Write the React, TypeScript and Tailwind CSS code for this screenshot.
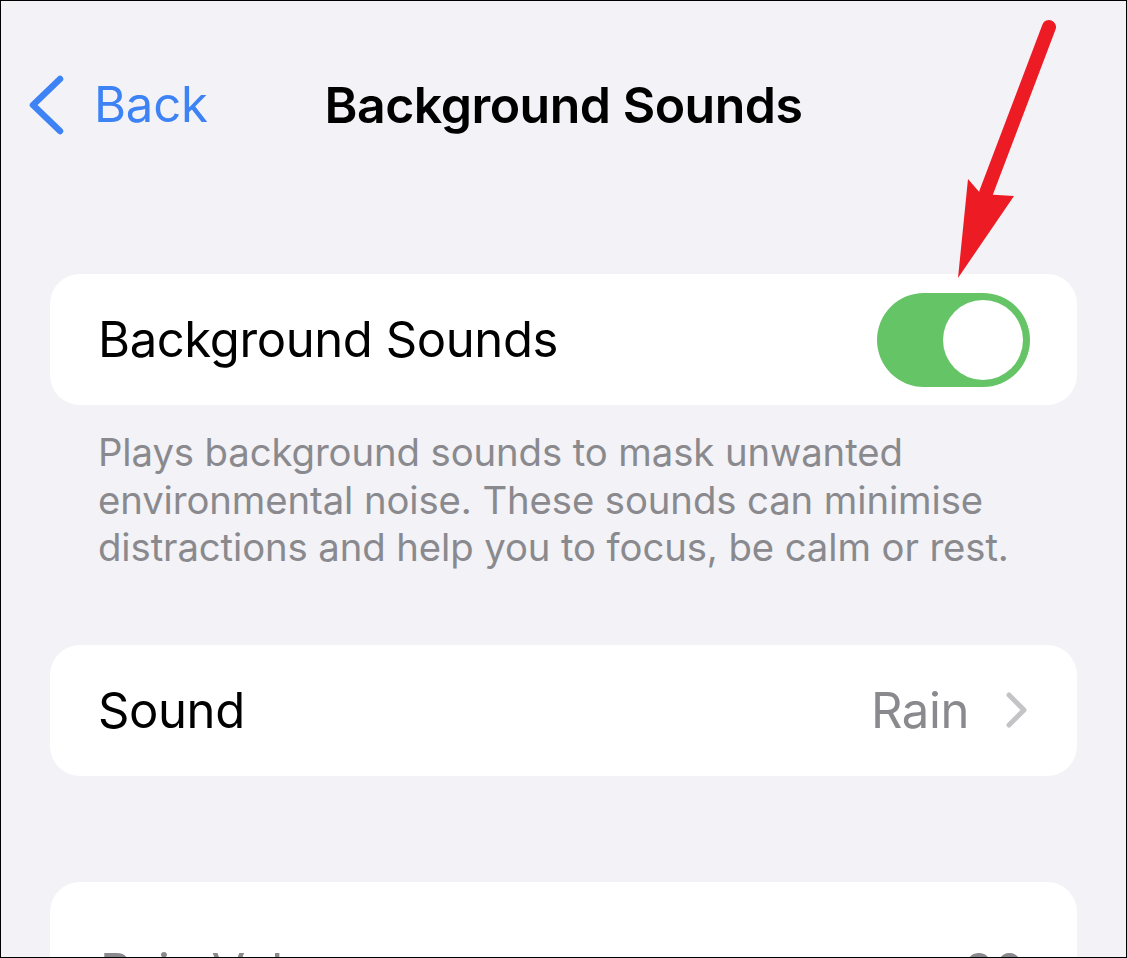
import React from "react";

const font = { fontFamily: "Inter, 'Noto Sans', 'Liberation Sans', sans-serif" };

function BackChevron() {
  return (
    <svg width="40" height="60" viewBox="0 0 40 60" className="shrink-0">
      <polyline
        points="31,4 4,30 31,56"
        fill="none"
        stroke="#3d83f5"
        strokeWidth="6.5"
        strokeLinecap="round"
        strokeLinejoin="round"
      />
    </svg>
  );
}

function Toggle() {
  return (
    <div className="w-[153px] h-[94px] rounded-full bg-[#65c466] flex items-center justify-end pr-[7px] shrink-0">
      <div className="w-[80px] h-[80px] rounded-full bg-white" />
    </div>
  );
}

function RowChevron() {
  return (
    <svg width="24" height="38" viewBox="0 0 24 38" className="shrink-0">
      <polyline
        points="4,4 19,19 4,34"
        fill="none"
        stroke="#c4c4c7"
        strokeWidth="5"
        strokeLinecap="round"
        strokeLinejoin="round"
      />
    </svg>
  );
}

function Arrow() {
  return (
    <svg
      className="absolute left-0 top-0 pointer-events-none"
      width="1127"
      height="958"
      viewBox="0 0 1127 958"
    >
      <line
        x1="1048"
        y1="26"
        x2="985"
        y2="192"
        stroke="#ed1c24"
        strokeWidth="14"
        strokeLinecap="round"
      />
      <polygon points="967,178 980,193 1013,195 957,277" fill="#ed1c24" />
    </svg>
  );
}

export default function App() {
  return (
    <div
      className="relative w-[1127px] h-[958px] overflow-hidden border border-black bg-[#f2f2f7]"
      style={font}
    >
      {/* navigation bar */}
      <div className="relative h-[205px] flex items-center">
        <div className="flex items-center pl-[28px] gap-[25px] pt-[2px]">
          <BackChevron />
          <span className="text-[49px] leading-none text-[#3d83f5] tracking-[-0.2px]">Back</span>
        </div>
        <div className="absolute inset-0 flex items-center justify-center pt-[2px]">
          <span className="text-[50px] leading-none font-semibold text-black tracking-[-0.5px]">
            Background Sounds
          </span>
        </div>
      </div>

      {/* background sounds switch */}
      <div className="mt-[68px] mx-[49px] h-[131px] rounded-[30px] bg-white flex items-center justify-between pl-[48px] pr-[47px]">
        <span className="text-[49px] leading-none text-black tracking-[-0.4px]">Background Sounds</span>
        <Toggle />
      </div>

      <p className="mt-[24px] mx-[49px] pl-[48px] pr-[20px] text-[38.3px] leading-[47.5px] text-[#8a8a8e] tracking-[-0.1px]">
        Plays background sounds to mask unwanted environmental noise. These sounds can minimise
        distractions and help you to focus, be calm or rest.
      </p>

      {/* sound picker */}
      <div className="mt-[73px] mx-[49px] h-[131px] rounded-[30px] bg-white flex items-center justify-between pl-[48px] pr-[48px]">
        <span className="text-[49px] leading-none text-black tracking-[-0.4px]">Sound</span>
        <div className="flex items-center gap-[36px]">
          <span className="text-[49px] leading-none text-[#8a8a8e] tracking-[-0.4px]">Rain</span>
          <RowChevron />
        </div>
      </div>

      {/* rain volume */}
      <div className="mt-[106px] mx-[49px] h-[200px] rounded-[30px] bg-white pl-[50px] pr-[52px] pt-[65px] flex justify-between">
        <span className="text-[49px] leading-none text-[#8a8a8e] tracking-[-0.4px]">Rain Volume</span>
        <span className="text-[49px] leading-none text-[#8a8a8e]">80</span>
      </div>

      <Arrow />
    </div>
  );
}
